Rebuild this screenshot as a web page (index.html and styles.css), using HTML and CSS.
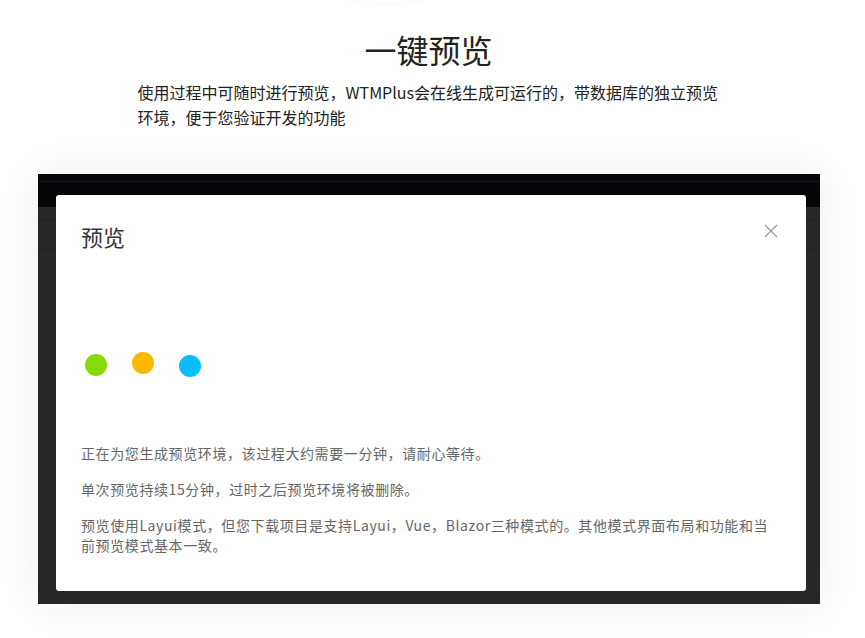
FILE: index.html
```html
<!DOCTYPE html>
<html lang="zh-CN">
<head>
<meta charset="utf-8">
<title>一键预览</title>
<link rel="stylesheet" href="styles.css">
</head>
<body>
<section class="feature">
  <div class="top-shadow"></div>
  <h1 class="feature-title">一键预览</h1>
  <p class="feature-desc">使用过程中可随时进行预览，WTMPlus会在线生成可运行的，带数据库的独立预览环境，便于您验证开发的功能</p>
  <div class="shot">
    <div class="shot-lines"></div>
    <div class="modal">
      <div class="modal-head">
        <h2 class="modal-title">预览</h2>
        <span class="modal-close" aria-label="关闭">
          <svg width="14" height="14" viewBox="0 0 14 14"><path d="M1 1 L13 13 M13 1 L1 13" stroke="#9a9a9a" stroke-width="1.3" fill="none"/></svg>
        </span>
      </div>
      <div class="loader">
        <span class="dot dot-green"></span>
        <span class="dot dot-orange"></span>
        <span class="dot dot-blue"></span>
      </div>
      <div class="modal-body">
        <p>正在为您生成预览环境，该过程大约需要一分钟，请耐心等待。</p>
        <p>单次预览持续15分钟，过时之后预览环境将被删除。</p>
        <p>预览使用Layui模式，但您下载项目是支持Layui，Vue，Blazor三种模式的。其他模式界面布局和功能和当前预览模式基本一致。</p>
      </div>
    </div>
  </div>
</section>
</body>
</html>
```

FILE: styles.css
```css
html, body {
  margin: 0;
  padding: 0;
  background: #ffffff;
  font-family: "Noto Sans CJK SC", "Noto Sans", "Liberation Sans", sans-serif;
}

.feature {
  position: relative;
  width: 865px;
  height: 638px;
  overflow: hidden;
  padding-top: 27px;
  box-sizing: border-box;
}

.top-shadow {
  position: absolute;
  top: -10px;
  left: 345px;
  width: 80px;
  height: 12px;
  border-radius: 50%;
  box-shadow: 0 2px 6px rgba(0, 0, 0, 0.025);
}

.feature-title {
  margin: 0;
  text-align: center;
  font-size: 32px;
  line-height: 44px;
  font-weight: 400;
  color: #222;
  padding-right: 8px;
}

.feature-desc {
  width: 590px;
  margin: 9px auto 0;
  font-size: 16px;
  line-height: 25px;
  color: #222;
}

.shot {
  margin: 44px 0 0 38px;
  width: 782px;
  height: 430px;
  box-sizing: border-box;
  padding: 21px 14px 13px 18px;
  background: linear-gradient(to bottom, #050608 0, #050608 7px, #15171a 7px, #15171a 8px, #040507 8px, #040507 33px, #262626 33px);
  box-shadow: 0 0 40px rgba(0, 0, 0, 0.07);
  position: relative;
}

.shot-lines {
  position: absolute;
  left: 0;
  right: 0;
  top: 45px;
  height: 29px;
  border-top: 1px solid #1f1f1f;
  border-bottom: 1px solid #1f1f1f;
}

.modal {
  position: relative;
  height: 100%;
  background: #fff;
  border-radius: 3px;
  padding: 20px 25px 0 25px;
  box-sizing: border-box;
}

.modal-head {
  display: flex;
  justify-content: space-between;
  align-items: flex-start;
}

.modal-title {
  margin: 0;
  font-size: 22px;
  line-height: 42px;
  font-weight: 400;
  color: #333;
}

.modal-close {
  display: block;
  margin-top: 9px;
  margin-right: 3px;
  width: 14px;
  height: 14px;
}

.modal-close svg {
  display: block;
}

.loader {
  display: flex;
  gap: 25px;
  padding: 96px 0 0 4px;
  height: 22px;
}

.dot {
  width: 22px;
  height: 22px;
  border-radius: 50%;
  display: block;
}

.dot-green { background: #88d90a; margin-top: 1px; }
.dot-orange { background: #ffb800; margin-top: -1px; }
.dot-blue { background: #0bbcff; margin-top: 2px; }

.modal-body {
  padding-top: 68px;
  padding-right: 9px;
}

.modal-body p {
  margin: 0 0 16px;
  font-size: 14px;
  letter-spacing: 0.6px;
  line-height: 20px;
  color: #666;
}
```
